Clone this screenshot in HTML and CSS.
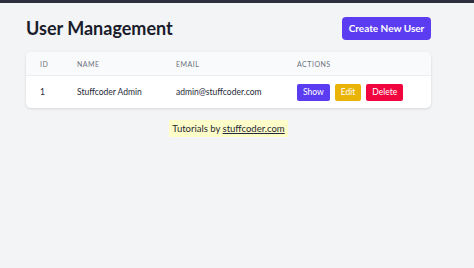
FILE: index.html
```html
<!DOCTYPE html>
<html lang="en">
<head>
    <meta charset="UTF-8">
    <meta name="viewport" content="width=device-width, initial-scale=1.0">
    <title>User Management</title>
    <link rel="stylesheet" href="styles.css">
</head>
<body>
    <div class="topbar"></div>
    <div class="container">
        <div class="header">
            <h1>User Management</h1>
            <button class="btn btn-create">Create New User</button>
        </div>
        <div class="card">
            <table class="users">
                <thead>
                    <tr>
                        <th class="col-id">ID</th>
                        <th class="col-name">Name</th>
                        <th class="col-email">Email</th>
                        <th>Actions</th>
                    </tr>
                </thead>
                <tbody>
                    <tr>
                        <td class="col-id">1</td>
                        <td class="col-name">Stuffcoder Admin</td>
                        <td class="col-email">admin@stuffcoder.com</td>
                        <td class="actions">
                            <button class="btn btn-sm btn-show">Show</button>
                            <button class="btn btn-sm btn-edit">Edit</button>
                            <button class="btn btn-sm btn-delete">Delete</button>
                        </td>
                    </tr>
                </tbody>
            </table>
        </div>
        <div class="footer">
            <span class="credit">Tutorials by <a href="#">stuffcoder.com</a></span>
        </div>
    </div>
</body>
</html>
```

FILE: styles.css
```css
body {
    font-family: Lato, 'Noto Sans', sans-serif;
    background-color: #f3f4f6;
    color: #1f2937;
    margin: 0;
    height: 268px;
}
.topbar {
    height: 3px;
    background-color: #2d2f3d;
}
.container {
    padding: 0 43px 0 26px;
}
.header {
    display: flex;
    justify-content: space-between;
    align-items: center;
    height: 49px;
}
h1 {
    font-size: 18px;
    font-weight: 700;
    color: #1a1c2b;
    margin: 0;
    padding-top: 1px;
}
.btn {
    border: none;
    color: white;
    font-family: inherit;
    cursor: pointer;
}
.btn-create {
    background-color: #5b3cf0;
    font-size: 10px;
    font-weight: 700;
    height: 23px;
    width: 89px;
    padding: 0;
    border-radius: 4px;
    margin-top: 1px;
}
.card {
    background-color: #fff;
    border-radius: 5px;
    box-shadow: 0 1px 3px rgba(0, 0, 0, 0.12);
    overflow: hidden;
}
.users {
    width: 100%;
    border-collapse: collapse;
}
.users th {
    background-color: #f9fafb;
    color: #6b7280;
    font-size: 7px;
    font-weight: 400;
    letter-spacing: 0.5px;
    text-transform: uppercase;
    text-align: left;
    height: 23px;
    padding: 0;
    border-bottom: 1px solid #eceef1;
}
.users td {
    font-size: 8.5px;
    color: #1f2937;
    height: 32px;
    padding: 0;
}
.col-id {
    padding-left: 14px !important;
    width: 37px;
}
.col-name {
    width: 99px;
}
.col-email {
    width: 121px;
}
.actions {
    display: flex;
    gap: 5px;
    align-items: center;
}
.btn-sm {
    font-size: 8.5px;
    height: 17px;
    padding: 0 6px;
    border-radius: 2px;
}
.btn-show {
    background-color: #5b3cf0;
}
.btn-edit {
    background-color: #eab308;
}
.btn-delete {
    background-color: #f0053f;
}
.footer {
    text-align: center;
    margin-top: 8px;
}
.credit {
    background-color: #fefcc8;
    font-size: 9.5px;
    color: #1f2937;
    padding: 3px 3px;
}
.credit a {
    color: #1f2937;
}
```
